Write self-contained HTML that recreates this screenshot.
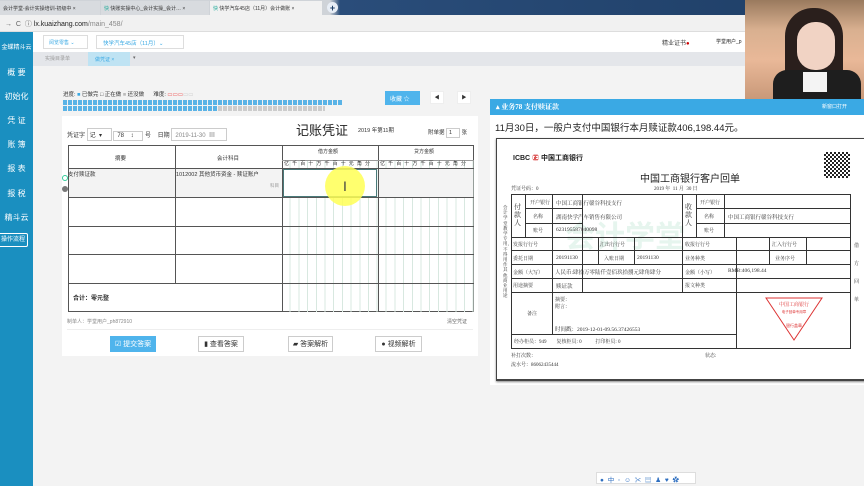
<!DOCTYPE html><html><head><meta charset="utf-8"><style>
*{margin:0;padding:0;box-sizing:border-box}
body{width:864px;height:486px;overflow:hidden;background:#f3f3f3;font-family:"Liberation Sans","Noto Sans CJK SC",sans-serif;font-size:7px;color:#333;position:relative}
.a{position:absolute}
.sb div{position:absolute;left:0;width:33px;text-align:center;color:#fff;font-size:8px}
.c{display:flex;align-items:center;justify-content:center}
.btn{position:absolute;height:16px;border:1px solid #ccc;background:#fff;font-size:7px;display:flex;align-items:center;justify-content:center;gap:3px}
.vl{position:absolute;width:1px;background:#555}
.hl{position:absolute;height:1px;background:#555}
.r{position:absolute;font-family:"Liberation Serif","Noto Serif CJK SC",serif;font-size:5px;color:#333}
</style></head><body>
<div class="a" style="left:0;top:0;width:864px;height:15px;background:linear-gradient(90deg,#cfd3d8 0,#cfd3d8 330px,#2a4d7a 340px,#1e3e66 100%)"></div>
<div class="a" style="left:0;top:1px;width:100px;height:14px;background:#d8dbdf;font-size:5px;padding:4px 3px;white-space:nowrap;overflow:hidden">会计学堂-会计实操培训-初级中 ×</div>
<div class="a" style="left:101px;top:1px;width:108px;height:14px;background:#d8dbdf;font-size:5px;padding:4px 3px;white-space:nowrap;overflow:hidden"><span style="color:#2a9">快</span> 快账实操中心_会计实操_会计… ×</div>
<div class="a" style="left:210px;top:1px;width:112px;height:14px;background:#f1f1f1;font-size:5px;padding:4px 3px;white-space:nowrap;overflow:hidden"><span style="color:#2a9">快</span> 快学汽车45店（11月）会计做账 ×</div>
<div class="a c" style="left:327px;top:2px;width:11px;height:11px;border-radius:50%;background:#e8eef6;color:#1e3e66;font-size:9px;font-weight:bold">+</div>
<div class="a" style="left:0;top:15px;width:864px;height:17px;background:#f1f1f1;border-bottom:1px solid #ddd"></div>
<div class="a" style="left:5px;top:19px;font-size:7px;color:#666">→ &nbsp;C &nbsp;ⓘ <span style="color:#222">lx.kuaizhang.com</span><span style="color:#888">/main_458/</span></div>
<div class="a sb" style="left:0;top:32px;width:33px;height:454px;background:#1a8fc0">
<div style="top:10px;font-size:6px">金蝶精斗云</div>
<div style="top:35px">概 要</div><div style="top:59px">初始化</div><div style="top:83px">凭 证</div>
<div style="top:107px">账 簿</div><div style="top:131px">报 表</div><div style="top:156px">报 税</div>
<div style="top:180px">精斗云</div>
<div style="top:201px;left:-2px;width:30px;height:14px;border:1px solid #fff;border-radius:2px;font-size:6px;line-height:12px">操作流程</div>
</div>
<div class="a" style="left:33px;top:32px;width:712px;height:20px;background:#fff"></div>
<div class="a" style="left:43px;top:35px;width:45px;height:14px;border:1px solid #ddd;font-size:5px;color:#3aa9e4;padding:3px 5px">阅览零售 ⌄</div>
<div class="a" style="left:96px;top:35px;width:88px;height:14px;border:1px solid #ddd;font-size:5.5px;color:#3aa9e4;padding:3px 6px">快学汽车45店（11月）⌄</div>
<div class="a" style="left:662px;top:38px;font-size:6px;color:#444">精业证书<span style="color:#c00">●</span></div>
<div class="a" style="left:716px;top:38px;font-size:5px;color:#222">学堂用户_p</div>
<div class="a" style="left:33px;top:52px;width:712px;height:14px;background:#e4e6ea"></div>
<div class="a" style="left:45px;top:55px;font-size:5px;color:#999">实操目录单</div>
<div class="a" style="left:88px;top:52px;width:42px;height:14px;background:#bfe3f3;font-size:5px;color:#3aa9e4;padding:4px 7px">做凭证 ×</div>
<div class="a" style="left:133px;top:55px;font-size:5px;color:#666">▾</div>
<div class="a" style="left:745px;top:0;width:119px;height:100px;background:linear-gradient(180deg,#9a7a5e 0,#d9b090 30%,#e9b898 60%,#c89878 100%);overflow:hidden">
<div class="a" style="left:40px;top:8px;width:58px;height:92px;border-radius:28px 28px 0 0;background:#2a1f1c"></div>
<div class="a" style="left:52px;top:22px;width:38px;height:48px;border-radius:18px;background:#f1d3c4"></div>
<div class="a" style="left:28px;top:70px;width:88px;height:30px;border-radius:14px 14px 0 0;background:#1e1e1e"></div>
<div class="a" style="left:58px;top:72px;width:24px;height:20px;background:#f4f4f4"></div>
</div>
<div class="a" style="left:63px;top:90px;font-size:5.5px;color:#333">进度: <span style="color:#3aa9e4">■</span> 已做完 □ 正在做 <span style="color:#bbb">■</span> 还没做 &nbsp;&nbsp;&nbsp;&nbsp; 难度: <span style="color:#e55">▭▭▭</span><span style="color:#ccc">▭▭</span></div>
<div class="a" style="left:63px;top:100px;width:280px;height:5px;background:repeating-linear-gradient(90deg,#5ab3e6 0 4px,transparent 4px 5px)"></div>
<div class="a" style="left:63px;top:106px;width:262px;height:5px;background:repeating-linear-gradient(90deg,#5ab3e6 0 4px,transparent 4px 5px)"></div>
<div class="a" style="left:218px;top:106px;width:107px;height:5px;background:repeating-linear-gradient(90deg,#ccc 0 4px,transparent 4px 5px)"></div>
<div class="a" style="left:385px;top:91px;width:35px;height:14px;background:#4fb4ec;color:#fff;font-size:6px;padding:3px 5px">收藏 ☆</div>
<div class="a c" style="left:430px;top:91px;width:14px;height:13px;background:#fff;border:1px solid #eee;font-size:5px">◀</div>
<div class="a c" style="left:457px;top:91px;width:14px;height:13px;background:#fff;border:1px solid #eee;font-size:5px">▶</div>
<div class="a" style="left:62px;top:116px;width:416px;height:240px;background:#fff"></div>
<div class="a" style="left:67px;top:128px;font-size:6px">凭证字 <span style="display:inline-block;border:1px solid #ccc;width:25px;padding:1px 2px">记 &nbsp;▾</span> <span style="display:inline-block;border:1px solid #ccc;width:30px;padding:1px 3px">78 &nbsp;&nbsp;&nbsp;↕</span> 号 &nbsp;&nbsp; 日期 <span style="display:inline-block;border:1px solid #ccc;width:56px;padding:1px 3px;color:#888">2019-11-30 &nbsp;▦</span></div>
<div class="a" style="left:296px;top:120px;font-size:13px;color:#222">记账凭证</div>
<div class="a" style="left:358px;top:126px;font-size:5.5px">2019 年第11期</div>
<div class="a" style="left:428px;top:128px;font-size:5.5px">附单据 <span style="display:inline-block;border:1px solid #ccc;width:14px;padding:1px 2px">1</span> 张</div>
<div class="a" style="left:68px;top:145px;width:406px;height:167px;border:1px solid #555"></div>
<div class="a" style="left:69px;top:169px;width:213px;height:28px;background:#f3f3f3"></div>
<div class="a" style="left:282px;top:160px;width:96px;height:152px;background:repeating-linear-gradient(90deg,transparent 0 7.7px,#d8e8e0 7.7px 8.7px)"></div>
<div class="a" style="left:378px;top:160px;width:96px;height:152px;background:repeating-linear-gradient(90deg,transparent 0 7.7px,#d8e8e0 7.7px 8.7px)"></div>
<div class="a" style="left:283px;top:169px;width:94px;height:28px;background:#fff;border:1px solid #4a7a7a"></div>
<div class="a" style="left:379px;top:169px;width:94px;height:28px;background:#f3f3f3"></div>
<div class="vl" style="left:175px;top:145px;height:138px"></div>
<div class="vl" style="left:282px;top:145px;height:167px"></div>
<div class="vl" style="left:378px;top:145px;height:167px"></div>
<div class="hl" style="left:282px;top:160px;width:192px;background:#999"></div>
<div class="hl" style="left:68px;top:168px;width:406px"></div>
<div class="hl" style="left:68px;top:197px;width:406px"></div>
<div class="hl" style="left:68px;top:226px;width:406px"></div>
<div class="hl" style="left:68px;top:254px;width:406px"></div>
<div class="hl" style="left:68px;top:283px;width:406px"></div>
<div class="a" style="left:115px;top:154px;font-size:5.5px">摘要</div>
<div class="a" style="left:217px;top:154px;font-size:5.5px">会计科目</div>
<div class="a" style="left:318px;top:148px;font-size:5px">借方金额</div>
<div class="a" style="left:414px;top:148px;font-size:5px">贷方金额</div>
<div class="a" style="left:284px;top:160px;font-size:5px;letter-spacing:3.1px">亿千百十万千百十元角分</div>
<div class="a" style="left:380px;top:160px;font-size:5px;letter-spacing:3.1px">亿千百十万千百十元角分</div>
<div class="a" style="left:68px;top:170px;font-size:5.5px">支付赎证款</div>
<div class="a" style="left:176px;top:170px;font-size:5.5px">1012002 其他货币资金 - 赎证账户</div>
<div class="a" style="left:270px;top:183px;font-size:4.5px;color:#999">科目</div>
<div class="a" style="left:62px;top:175px;width:6px;height:6px;border-radius:50%;border:1.5px solid #3c9;"></div>
<div class="a" style="left:62px;top:186px;width:6px;height:6px;border-radius:50%;background:#777"></div>
<div class="a c" style="left:325px;top:166px;width:40px;height:40px;border-radius:50%;background:#ffff55;opacity:.85;font-size:14px;color:#222">I</div>
<div class="a" style="left:73px;top:293px;font-size:6px;font-weight:bold">合计：零元整</div>
<div class="a" style="left:67px;top:318px;font-size:5px;color:#888">制单人：学堂用户_ph872910</div>
<div class="a" style="left:447px;top:318px;font-size:5px;color:#666">清空凭证</div>
<div class="hl" style="left:67px;top:329px;width:406px;background:#eee"></div>
<div class="btn" style="left:110px;top:336px;width:46px;background:#4fb4ec;border-color:#4fb4ec;color:#fff">☑ 提交答案</div>
<div class="btn" style="left:198px;top:336px;width:46px">▮ 查看答案</div>
<div class="btn" style="left:288px;top:336px;width:45px">▰ 答案解析</div>
<div class="btn" style="left:375px;top:336px;width:47px">● 视频解析</div>
<div class="a" style="left:490px;top:99px;width:374px;height:16px;background:#3aa9e4;color:#fff;font-size:7px;font-weight:bold;padding:3px 6px;font-family:'Liberation Serif','Noto Serif CJK SC',serif">▴ 业务78 支付赎证款</div>
<div class="a" style="left:822px;top:103px;font-size:5px;color:#fff">新窗口打开</div>
<div class="a" style="left:490px;top:115px;width:374px;height:270px;background:#fff"></div>
<div class="a" style="left:495px;top:120px;font-size:9.5px;color:#222">11月30日，一般户支付中国银行本月赎证款406,198.44元。</div>
<div class="a" style="left:496px;top:138px;width:370px;height:243px;border:1px solid #444;border-bottom:2px solid #444;box-shadow:0 1px 2px #888"></div>
<div class="a" style="left:565px;top:212px;width:170px;height:32px;color:#e6f5ee;font-size:30px;font-weight:bold;white-space:nowrap">会计学堂</div>
<div class="a" style="left:513px;top:153px;font-size:7px;font-weight:bold;color:#222">ICBC <span style="color:#c00">㊣</span> 中国工商银行</div>
<div class="a" style="left:824px;top:152px;width:26px;height:26px;background:repeating-conic-gradient(#222 0 25%,#fff 0 50%) 0 0/4px 4px"></div>
<div class="a" style="left:640px;top:170px;font-size:10px;color:#222">中国工商银行客户回单</div>
<div class="r" style="left:511px;top:185px">凭证号码：0</div>
<div class="r" style="left:654px;top:185px">2019 年 &nbsp;11 月 &nbsp;30 日</div>
<div class="a" style="left:511px;top:194px;width:340px;height:155px;border:1px solid #333"></div>
<div class="hl" style="left:525px;top:208px;width:57px;background:#333"></div><div class="hl" style="left:525px;top:223px;width:57px;background:#333"></div>
<div class="hl" style="left:696px;top:208px;width:155px;background:#333"></div><div class="hl" style="left:696px;top:223px;width:155px;background:#333"></div>
<div class="hl" style="left:511px;top:237px;width:340px;background:#333"></div>
<div class="hl" style="left:511px;top:250px;width:340px;background:#333"></div>
<div class="hl" style="left:511px;top:264px;width:340px;background:#333"></div>
<div class="hl" style="left:511px;top:278px;width:340px;background:#333"></div>
<div class="hl" style="left:511px;top:292px;width:340px;background:#333"></div>
<div class="hl" style="left:511px;top:334px;width:225px;background:#333"></div>
<div class="vl" style="left:525px;top:194px;height:43px;background:#333"></div>
<div class="vl" style="left:552px;top:194px;height:140px;background:#333"></div>
<div class="vl" style="left:582px;top:194px;height:98px;background:#333"></div>
<div class="vl" style="left:682px;top:194px;height:98px;background:#333"></div>
<div class="vl" style="left:696px;top:194px;height:43px;background:#333"></div>
<div class="vl" style="left:724px;top:194px;height:43px;background:#333"></div>
<div class="vl" style="left:736px;top:237px;height:112px;background:#333"></div>
<div class="vl" style="left:598px;top:237px;height:27px;background:#333"></div>
<div class="vl" style="left:634px;top:237px;height:27px;background:#333"></div>
<div class="vl" style="left:769px;top:237px;height:27px;background:#333"></div>
<div class="vl" style="left:806px;top:237px;height:27px;background:#333"></div>
<div class="r" style="left:514px;top:203px;font-size:7px;line-height:8px;width:8px">付款人</div>
<div class="r" style="left:685px;top:203px;font-size:7px;line-height:8px;width:8px">收款人</div>
<div class="r" style="left:530px;top:199px">开户银行</div><div class="r" style="left:556px;top:199px;font-size:5.5px">中国工商银行赣谷科技支行</div>
<div class="r" style="left:533px;top:213px">名称</div><div class="r" style="left:556px;top:213px;font-size:5.5px">湖南快学汽车销售有限公司</div>
<div class="r" style="left:533px;top:227px">账号</div><div class="r" style="left:556px;top:227px;font-size:5.5px">623195587040098</div>
<div class="r" style="left:700px;top:199px">开户银行</div>
<div class="r" style="left:704px;top:213px">名称</div><div class="r" style="left:728px;top:213px;font-size:5.5px">中国工商银行赣谷科技支行</div>
<div class="r" style="left:704px;top:227px">账号</div>
<div class="r" style="left:513px;top:241px">发报行行号</div><div class="r" style="left:600px;top:241px">汇出行行号</div><div class="r" style="left:685px;top:241px">收报行行号</div><div class="r" style="left:772px;top:241px">汇入行行号</div>
<div class="r" style="left:513px;top:255px">委托日期</div><div class="r" style="left:556px;top:255px;font-size:5.5px">20191130</div><div class="r" style="left:604px;top:255px">入账日期</div><div class="r" style="left:637px;top:255px;font-size:5.5px">20191130</div><div class="r" style="left:685px;top:255px">业务种类</div><div class="r" style="left:775px;top:255px">业务序号</div>
<div class="r" style="left:513px;top:269px">金额（大写）</div><div class="r" style="left:555px;top:268px;font-size:5.5px">人民币:肆拾万零陆仟壹佰玖拾捌元肆角肆分</div><div class="r" style="left:685px;top:269px">金额（小写）</div><div class="r" style="left:728px;top:268px;font-size:5.5px">RMB:406,198.44</div>
<div class="r" style="left:513px;top:282px">用途摘要</div><div class="r" style="left:556px;top:282px;font-size:5.5px">赎证款</div><div class="r" style="left:685px;top:282px">报文种类</div>
<div class="r" style="left:527px;top:310px">备注</div>
<div class="r" style="left:555px;top:296px">摘要：<br>附言：</div>
<div class="r" style="left:555px;top:325px;font-size:5.5px">时间戳：2019-12-01-09.56.37426553</div>
<div class="r" style="left:514px;top:338px">经办柜员：949 &nbsp;&nbsp;&nbsp;&nbsp;&nbsp;&nbsp; 复核柜员: 0 &nbsp;&nbsp;&nbsp;&nbsp;&nbsp;&nbsp;&nbsp;&nbsp;&nbsp; 打印柜员: 0</div>
<div class="r" style="left:511px;top:352px">补打次数：</div><div class="r" style="left:705px;top:352px">状态:</div>
<div class="r" style="left:511px;top:361px">流水号：86062435444</div>
<div class="r" style="left:503px;top:205px;width:6px;font-size:4.5px;line-height:5.2px">会计学堂教学专用，不得用作其他商业用途</div>
<div class="r" style="left:854px;top:238px;width:6px;font-size:5px;line-height:18px">借方回单</div>
<svg class="a" style="left:764px;top:296px" width="60" height="46"><polygon points="2,2 58,2 30,44" fill="none" stroke="#d33" stroke-width="1"/><text x="30" y="10" font-size="5" fill="#d33" text-anchor="middle" font-family="Noto Serif CJK SC,serif">中国工商银行</text><text x="30" y="17" font-size="3.5" fill="#d33" text-anchor="middle">电子回单专用章</text><text x="30" y="31" font-size="4" fill="#d33" text-anchor="middle">银行盖章</text></svg>
<div class="a" style="left:596px;top:472px;width:100px;height:12px;background:#fff;border:1px solid #ddd;font-size:6.5px;color:#2f6fc0;padding:1px 3px;letter-spacing:1px;white-space:nowrap;overflow:hidden">● 中 ◦ ☺ ✂ ▤ ♟ ♥ ✿</div>
</body></html>
